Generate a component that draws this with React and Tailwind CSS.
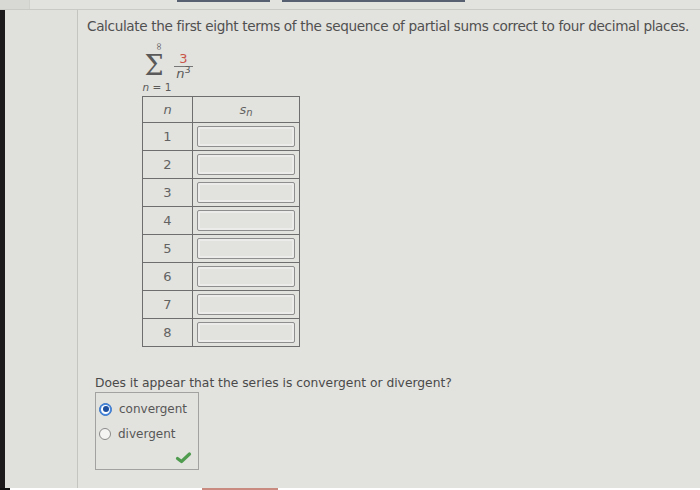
import React from 'react';

const font = { fontFamily: '"DejaVu Sans", Verdana, sans-serif' };

function Radio({ checked }) {
  return checked ? (
    <span className="flex items-center justify-center w-[13px] h-[13px] rounded-full bg-[#4b8be0] border border-[#3c78c8]">
      <span className="w-[9px] h-[9px] rounded-full bg-white flex items-center justify-center">
        <span className="w-[6px] h-[6px] rounded-full bg-[#1d4f9e]"></span>
      </span>
    </span>
  ) : (
    <span className="w-[12px] h-[12px] rounded-full border border-[#8a8a8a] bg-[#f4f4f2]"></span>
  );
}

export default function App() {
  const rows = [1, 2, 3, 4, 5, 6, 7, 8];

  return (
    <div className="w-[700px] h-[490px] flex flex-col bg-[#e2e2de] overflow-hidden text-[#575757]" style={font}>
      {/* bande du haut */}
      <div className="h-[10px] flex border-b border-[#c9c9c5] shrink-0">
        <div className="w-[30px] border-r border-[#d0d0cc] bg-[#d8d8d4]"></div>
        <div className="flex items-start">
          <div className="ml-[147px] w-[93px] h-[2px] bg-[#566070]"></div>
          <div className="ml-[12px] w-[183px] h-[2px] bg-[#566070]"></div>
        </div>
      </div>

      <div className="flex flex-1 min-h-0">
        <div className="w-[5px] bg-[#1c1a1a]"></div>
        <div className="w-[73px] border-r border-[#c4c4c0] bg-[#e0e0dc]"></div>

        <div className="flex-1 flex flex-col">
          <p className="mt-[7px] ml-[9px] text-[13.6px] leading-[18px] tracking-[-0.35px] text-[#505050]">
            Calculate the first eight terms of the sequence of partial sums correct to four decimal places.
          </p>

          {/* somme */}
          <div className="mt-[7px] ml-[64px] flex items-start text-[#5a5a5a]">
            <div className="w-[30px] flex flex-col items-center">
              <span className="h-[9px] text-[10px] leading-[9px] ml-[5px] rotate-90">∞</span>
              <span className="h-[25px] mt-[2px] text-[27px] leading-[25px] -ml-[6px]" style={{ fontFamily: '"DejaVu Serif", serif' }}>Σ</span>
              <span className="h-[12px] mt-[3px] text-[10.5px] leading-[12px] whitespace-nowrap"><i>n</i> = 1</span>
            </div>
            <div className="ml-[2px] mt-[10px] flex flex-col items-center w-[19px]">
              <span className="text-[13px] leading-[14px] text-[#c9564a]">3</span>
              <span className="w-[19px] h-px bg-[#777]"></span>
              <span className="text-[13px] leading-[14px]"><i>n</i><sup className="text-[9.5px]">3</sup></span>
            </div>
          </div>

          {/* tableau */}
          <table className="mt-[3px] ml-[64px] w-[158px] border-collapse border border-[#6e6e6e] text-[13px] text-[#626262]">
            <thead>
              <tr className="h-[26px]">
                <th className="w-[50px] border border-[#6e6e6e] font-normal italic">n</th>
                <th className="border border-[#6e6e6e] font-normal italic">s<sub className="text-[10px]">n</sub></th>
              </tr>
            </thead>
            <tbody>
              {rows.map((n) => (
                <tr key={n} className="h-[28px]">
                  <td className="border border-[#6e6e6e] text-center">{n}</td>
                  <td className="border border-[#6e6e6e] px-[4px]">
                    <div className="h-[21px] rounded-[2px] border border-[#8e8e8e] shadow-[inset_0_0_0_2px_#ececea]"></div>
                  </td>
                </tr>
              ))}
            </tbody>
          </table>

          {/* question */}
          <p className="mt-[28px] ml-[17px] text-[12.3px] leading-[16px] text-[#4a4a4a]">
            Does it appear that the series is convergent or divergent?
          </p>
          <div className="mt-[1px] ml-[17px] w-[104px] h-[78px] border border-[#a2a2a0] flex flex-col px-[3px] pt-[8px]">
            <label className="flex items-center gap-[7px] text-[12px] leading-[16px]">
              <Radio checked />
              <span>convergent</span>
            </label>
            <label className="mt-[9px] flex items-center gap-[7px] text-[12px] leading-[16px]">
              <Radio />
              <span>divergent</span>
            </label>
            <div className="flex justify-end mt-[9px] pr-[3px]">
              <svg width="17" height="13" viewBox="0 0 17 13">
                <path d="M2.5 7.5 L6.5 10.5 L14.5 3" fill="none" stroke="#4f9c4f" strokeWidth="3.2" strokeLinecap="round" strokeLinejoin="round" />
              </svg>
            </div>
          </div>
        </div>
      </div>

      {/* bande du bas */}
      <div className="h-[2px] flex bg-white shrink-0">
        <div className="w-[10px] bg-[#111]"></div>
        <div className="ml-[192px] w-[76px] bg-[#c98a80]"></div>
      </div>
    </div>
  );
}
